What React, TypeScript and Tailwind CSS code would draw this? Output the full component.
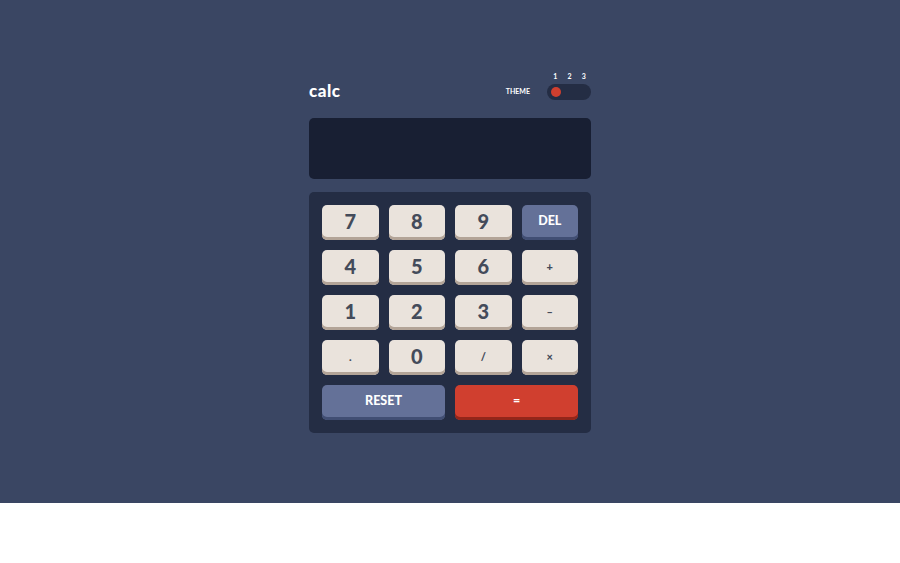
import React from "react";

const font = { fontFamily: "Lato, 'Open Sans', 'Liberation Sans', sans-serif" };

function Key({ label, kind = "num", span = false, small = false }: { label: string; kind?: "num" | "del" | "eq"; span?: boolean; small?: boolean }) {
  const base =
    kind === "num"
      ? "bg-[#eae3dc] text-[#444b5a] shadow-[inset_0_-3px_0_#b3a497]"
      : kind === "del"
      ? "bg-[#647198] text-white shadow-[inset_0_-3px_0_#414e73]"
      : "bg-[#d03f2f] text-white shadow-[inset_0_-3px_0_#93261a]";
  const size = kind === "num" ? (small ? "text-[11px]" : "text-[20px]") : "text-[12.5px]";
  return (
    <div
      className={`${base} ${span ? "col-span-2" : ""} ${size} h-[35px] pb-[3px] rounded-[5px] flex items-center justify-center font-black leading-none`}
    >
      {label}
    </div>
  );
}

export default function App() {
  return (
    <div className="h-[503px] bg-[#3a4663]" style={font}>
      <div className="w-[282px] mx-auto pt-[72px]">
        <div className="flex justify-between items-end h-[28px]">
          <div className="text-white font-black text-[17px] leading-none mb-[1px] tracking-[0.5px]">calc</div>
          <div className="flex items-end gap-[17px]">
            <div className="text-white font-bold text-[7px] leading-none mb-[5px]">THEME</div>
            <div className="flex flex-col gap-[4px]">
              <div className="grid grid-cols-3 text-center text-white font-bold text-[7px] leading-[8px] pl-[1px]">
                <span>1</span>
                <span>2</span>
                <span>3</span>
              </div>
              <div className="w-[44px] h-[16px] rounded-full bg-[#242d44] flex items-center px-[3px]">
                <div className="w-[10px] h-[10px] rounded-full bg-[#d03f2f] ml-[1px]" />
              </div>
            </div>
          </div>
        </div>
        <div className="mt-[18px] h-[61px] rounded-[5px] bg-[#181f33]" />
        <div className="mt-[13px] rounded-[5px] bg-[#242d44] p-[13px] grid grid-cols-4 gap-[10px]">
          <Key label="7" />
          <Key label="8" />
          <Key label="9" />
          <Key label="DEL" kind="del" />
          <Key label="4" />
          <Key label="5" />
          <Key label="6" />
          <Key label="+" small />
          <Key label="1" />
          <Key label="2" />
          <Key label="3" />
          <Key label="–" small />
          <Key label="." small />
          <Key label="0" />
          <Key label="/" small />
          <Key label="×" small />
          <Key label="RESET" kind="del" span />
          <Key label="=" kind="eq" span />
        </div>
      </div>
    </div>
  );
}
